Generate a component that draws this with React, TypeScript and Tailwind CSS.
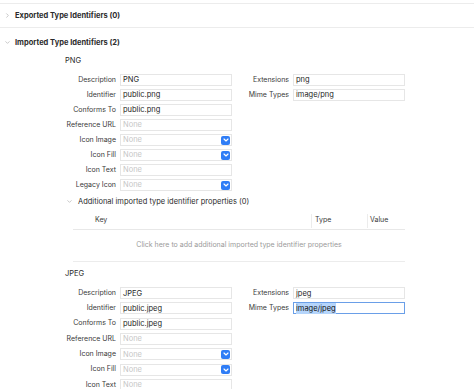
import { ChevronDown, ChevronRight } from 'lucide-react'

type Field = { label: string; value?: string; popup?: boolean }

const FIELDS_PNG: Field[] = [
  { label: 'Description', value: 'PNG' },
  { label: 'Identifier', value: 'public.png' },
  { label: 'Conforms To', value: 'public.png' },
  { label: 'Reference URL' },
  { label: 'Icon Image', popup: true },
  { label: 'Icon Fill', popup: true },
  { label: 'Icon Text' },
  { label: 'Legacy Icon', popup: true },
]

const FIELDS_JPEG: Field[] = [
  { label: 'Description', value: 'JPEG' },
  { label: 'Identifier', value: 'public.jpeg' },
  { label: 'Conforms To', value: 'public.jpeg' },
  { label: 'Reference URL' },
  { label: 'Icon Image', popup: true },
  { label: 'Icon Fill', popup: true },
  { label: 'Icon Text' },
]

function PopupButton() {
  return (
    <span className="flex h-[9px] w-[9px] items-center justify-center rounded-[2px] bg-[#2f7df6]">
      <ChevronDown className="h-[8px] w-[8px] text-white" strokeWidth={3.5} />
    </span>
  )
}

function FieldRow({
  label,
  value,
  popup,
  focused,
  rowClass,
  labelWidth = 'w-[55px]',
}: Field & { focused?: boolean; labelWidth?: string; rowClass: string }) {
  return (
    <div className={`flex items-center ${rowClass}`}>
      <div className={`${labelWidth} flex shrink-0 justify-end whitespace-nowrap pr-[4px] text-[7px] text-[#3a3a3a]`}>
        {label}
      </div>
      <div
        className={`flex h-[12px] w-[112px] items-center justify-between bg-white pl-[2px] pr-[1px] text-[7.5px] ${
          focused ? 'border-[1.5px] border-[#6a9fe8]' : 'border border-[#e6e6e6]'
        }`}
      >
        {value ? (
          <span className={focused ? 'bg-[#b5d5fb] text-[#111]' : 'text-[#1e1e1e]'}>{value}</span>
        ) : (
          <span className="text-[#c6c6c6]">None</span>
        )}
        {popup && <PopupButton />}
      </div>
    </div>
  )
}

function TypeBlock({
  name,
  ext,
  mime,
  fields,
  focusMime,
  rowClass,
}: {
  name: string
  ext: string
  mime: string
  fields: Field[]
  focusMime?: boolean
  rowClass: string
}) {
  return (
    <div className="pl-[65px]">
      <div className="mb-[7.5px] flex h-[8px] items-center text-[7.5px] text-[#2a2a2a]">{name}</div>
      <div className="flex">
        <div className="flex flex-col">
          {fields.map((f) => (
            <FieldRow key={f.label} {...f} rowClass={rowClass} />
          ))}
        </div>
        <div className="flex flex-col">
          <FieldRow label="Extensions" value={ext} labelWidth="w-[61px]" rowClass={rowClass} />
          <FieldRow label="Mime Types" value={mime} labelWidth="w-[61px]" focused={focusMime} rowClass={rowClass} />
        </div>
      </div>
    </div>
  )
}

export default function App() {
  return (
    <div className="h-[389px] w-[474px] overflow-hidden bg-white font-['Inter',sans-serif]">
      <div className="h-[3px]" />
      <div className="border-t border-[#ececec]" />
      <div className="flex h-[23px] items-center">
        <ChevronRight className="ml-[4px] h-[7px] w-[7px] text-[#b5b5b5]" strokeWidth={2.5} />
        <span className="ml-[4px] text-[7.5px] font-bold text-[#2b2b2b]">Exported Type Identifiers (0)</span>
      </div>
      <div className="border-t border-[#ececec]" />
      <div className="flex h-[29px] items-center">
        <ChevronDown className="ml-[4px] h-[7px] w-[7px] text-[#b5b5b5]" strokeWidth={2.5} />
        <span className="ml-[4px] text-[7.5px] font-bold text-[#2b2b2b]">Imported Type Identifiers (2)</span>
      </div>

      <TypeBlock name="PNG" ext="png" mime="image/png" fields={FIELDS_PNG} rowClass="h-[15px]" />

      <div className="ml-[66px] mt-[1.5px] flex h-[15px] items-center">
        <ChevronDown className="h-[7px] w-[7px] text-[#b5b5b5]" strokeWidth={2.5} />
        <span className="ml-[5px] text-[7.5px] text-[#2a2a2a]">Additional imported type identifier properties (0)</span>
      </div>

      <div className="ml-[73px] w-[332px]">
        <div className="flex h-[21px] items-center border-b border-[#e8e8e8] pt-[3px] text-[7px] text-[#3a3a3a]">
          <div className="w-[238px] pl-[22px]">Key</div>
          <div className="flex h-[14px] w-[56px] items-center border-l border-[#ececec] pl-[3px]">Type</div>
          <div className="flex h-[14px] flex-1 items-center border-l border-[#ececec] pl-[2px]">Value</div>
        </div>
        <div className="flex h-[32px] items-center justify-center border-b border-[#ececec] text-[7px] text-[#9a9a9a]">
          Click here to add additional imported type identifier properties
        </div>
      </div>

      <div className="mt-[8px]">
        <TypeBlock name="JPEG" ext="jpeg" mime="image/jpeg" fields={FIELDS_JPEG} focusMime rowClass="h-[15.3px]" />
      </div>
    </div>
  )
}
